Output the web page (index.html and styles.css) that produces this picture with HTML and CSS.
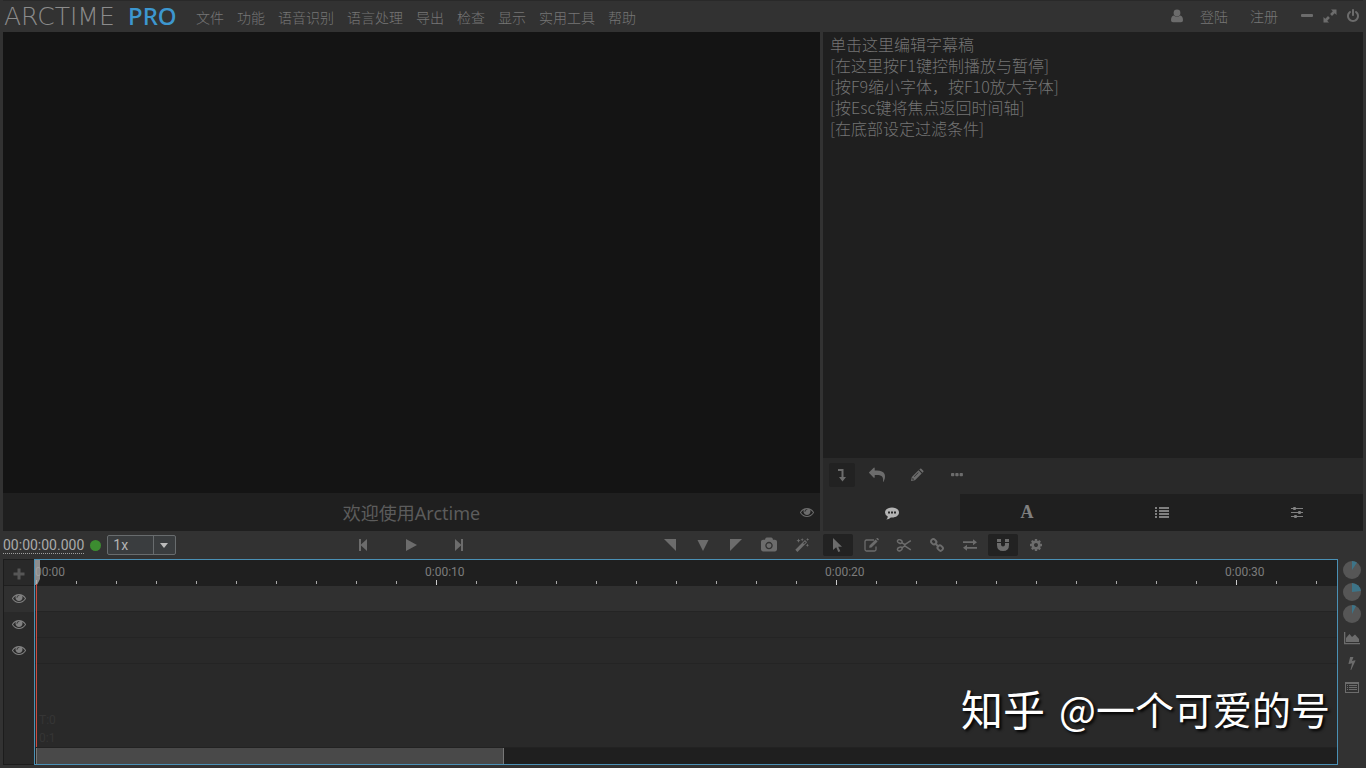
FILE: index.html
```html
<!DOCTYPE html>
<html lang="zh-CN">
<head>
<meta charset="utf-8">
<title>Arctime Pro</title>
<link rel="stylesheet" href="styles.css">
</head>
<body>
<svg class="sprite" aria-hidden="true">
  <symbol id="eye" viewBox="0 0 1792 1792"><path d="M1664 960q-152-236-381-353 61 104 61 225 0 185-131.5 316.5t-316.5 131.5-316.5-131.5-131.5-316.5q0-121 61-225-229 117-381 353 133 205 333.5 326.5t434.5 121.5 434.5-121.5 333.5-326.5zm-720-384q0-20-14-34t-34-14q-125 0-214.5 89.5t-89.5 214.5q0 20 14 34t34 14 34-14 14-34q0-86 61-147t147-61q20 0 34-14t14-34zm848 384q0 34-20 69-140 230-376.5 368.5t-499.5 138.5-499.5-139-376.5-368q-20-35-20-69t20-69q140-229 376.5-368t499.5-139 499.5 139 376.5 368q20 35 20 69z"/></symbol>
</svg>

<header class="topbar">
  <h1 class="brand"><span class="brand-name">ARCTIME</span><span class="brand-pro">PRO</span></h1>
  <nav class="menu">
    <button>文件</button><button>功能</button><button>语音识别</button><button>语言处理</button><button>导出</button><button>检查</button><button>显示</button><button>实用工具</button><button>帮助</button>
  </nav>
  <div class="account">
    <svg class="icon person" viewBox="0 0 14 14"><circle cx="7" cy="4" r="3.4"/><path d="M3.8 6.4Q1 7 1 11.2 1 13.2 3 13.2h8q2 0 2-2Q13 7 10.2 6.4 7 9.200 3.800 6.400z"/></svg>
    <a href="#login">登陆</a>
    <a href="#register">注册</a>
  </div>
  <div class="window-controls">
    <button aria-label="最小化"><svg class="icon" viewBox="0 0 14 14"><rect x="1" y="5" width="12" height="3" rx="1"/></svg></button>
    <button aria-label="缩放"><svg class="icon" viewBox="0 0 14 14"><path d="M8 .5h5.500V6l-1.800-1.800L9 6.900 7.100 5l2.700-2.700zM6 13.500H.5V8l1.800 1.800L5 7.100 6.900 9l-2.700 2.700z"/></svg></button>
    <button aria-label="退出"><svg class="icon" viewBox="0 0 1792 1792"><path d="M1664 896q0 156-61 298t-164 245-245 164-298 61-298-61-245-164-164-245-61-298q0-182 80.500-343t226.500-270q43-32 95.500-25t83.500 50q32 42 24.500 94.500t-49.500 84.500q-98 74-151.500 181t-53.500 228q0 104 40.500 198.500t109.500 163.500 163.500 109.500 198.500 40.500 198.500-40.500 163.500-109.500 109.500-163.500 40.500-198.500q0-121-53.500-228t-151.500-181q-42-32-49.500-84.500t24.500-94.500q31-43 84-50t95 25q146 109 226.500 270t80.500 343zm-640-768v640q0 52-38 90t-90 38-90-38-38-90v-640q0-52 38-90t90-38 90 38 38 90z"/></svg></button>
  </div>
</header>

<main class="workspace columns">
  <section class="player">
    <div class="screen"></div>
    <div class="caption">
      <p>欢迎使用Arctime</p>
      <button aria-label="显示字幕"><svg class="icon"><use href="#eye"/></svg></button>
    </div>
  </section>
  <section class="script">
    <textarea class="editor" aria-label="字幕稿" spellcheck="false">单击这里编辑字幕稿
[在这里按F1键控制播放与暂停]
[按F9缩小字体，按F10放大字体]
[按Esc键将焦点返回时间轴]
[在底部设定过滤条件]</textarea>
    <div class="script-tools">
      <button class="pressed" aria-label="逐行"><svg class="icon" viewBox="0 0 14 14"><path d="M3 1h5.500v8H11l-3.500 4.500L4 9h2.500V3H3z"/></svg></button>
      <div class="script-extra">
        <button aria-label="撤销"><svg class="icon large" viewBox="0 0 1792 1792"><path d="M1792 1120q0 166-127 451-3 7-10.500 24t-13.500 30-13 22q-12 17-28 17-15 0-23.500-10t-8.500-25q0-9 2.500-26.500t2.500-23.500q5-68 5-123 0-101-17.500-181t-48.500-138.500-80-101-105.500-69.500-133-42.500-154-21.500-175.500-6h-224v256q0 26-19 45t-45 19-45-19l-512-512q-19-19-19-45t19-45l512-512q19-19 45-19t45 19 19 45v256h224q713 0 875 403 53 134 53 333z"/></svg></button>
        <button aria-label="编辑"><svg class="icon" viewBox="0 0 14 14"><path fill-rule="evenodd" d="M1 13l.8-4L8.500 2.300l3.200 3.200L5 12.200zM2.600 9.800l-.3 1.900 1.900-.3zM9.300 1.500l.8-.8q.6-.5 1.200 0l2 2q.5.6 0 1.200l-.8.8zM8.200 4.300L4 8.500l.4.400 4.200-4.200z"/></svg></button>
        <button aria-label="更多"><svg class="icon" viewBox="0 0 14 14"><rect x="1" y="5" width="3.300" height="3.300" rx=".8"/><rect x="5.300" y="5" width="3.300" height="3.300" rx=".8"/><rect x="9.600" y="5" width="3.300" height="3.300" rx=".8"/></svg></button>
      </div>
    </div>
    <div class="tabs" role="tablist">
      <button role="tab" aria-selected="true" aria-label="字幕稿"><svg class="icon large" viewBox="0 0 16 16"><path fill-rule="evenodd" d="M8 2.500c4.200 0 7 2.200 7 5s-2.800 5-7 5l-1.200-.1Q5 14.300 2.300 14.500q1.400-1.200 1.500-3Q1 10 1 7.500c0-2.800 2.800-5 7-5zM4 6.500v2h2v-2zm3 0v2h2v-2zm3 0v2h2v-2z"/></svg></button>
      <button role="tab" aria-selected="false" class="letter">A</button>
      <button role="tab" aria-selected="false" aria-label="列表"><svg class="icon" viewBox="0 0 14 14"><path d="M0 1h2v2H0zM4 1h10v2H4zM0 4h2v2H0zM4 4h10v2H4zM0 7h2v2H0zM4 7h10v2H4zM0 10h2v2H0zM4 10h10v2H4z"/></svg></button>
      <button role="tab" aria-selected="false" aria-label="设置"><svg class="icon" viewBox="0 0 14 14"><path d="M1 2h12v1H1zM1 6h12v1H1zM1 10h12v1H1z"/><rect x="3" y="1" width="3" height="3" rx="1"/><rect x="8" y="5" width="3" height="3" rx="1"/><rect x="4" y="9" width="3" height="3" rx="1"/></svg></button>
    </div>
  </section>
</main>

<div class="toolbar columns">
  <div class="playback">
    <div class="clock">
      <output class="timecode">00:00:00.000</output>
      <span class="status-dot"></span>
      <label class="speed"><select aria-label="播放速度"><option>1x</option><option>2x</option></select><svg class="speed-arrow" viewBox="0 0 8 5"><path d="M0 0h8L4 5z"/></svg></label>
    </div>
    <div class="transport">
      <button aria-label="上一条"><svg class="icon" viewBox="0 0 14 14"><path d="M3 1h2v5.500L11 1v12L5 7.500V13H3z"/></svg></button>
      <button aria-label="播放"><svg class="icon" viewBox="0 0 14 14"><path d="M2 1l11 6-11 6z"/></svg></button>
      <button aria-label="下一条"><svg class="icon" viewBox="0 0 14 14"><path d="M11 1H9v5.500L3 1v12l6-5.500V13h2z"/></svg></button>
    </div>
    <div class="tools marks">
      <button aria-label="设定起点"><svg class="icon" viewBox="0 0 14 14"><path d="M1 1h12v12z"/></svg></button>
      <button aria-label="标记"><svg class="icon" viewBox="0 0 14 14"><path d="M1.500 2h11L7 13z"/></svg></button>
      <button aria-label="设定终点"><svg class="icon" viewBox="0 0 14 14"><path d="M1 1h12L1 13z"/></svg></button>
      <button aria-label="截图"><svg class="icon large" viewBox="-64 0 1920 1792"><path d="M896 672q119 0 203.500 84.500t84.500 203.500-84.500 203.500-203.500 84.500-203.500-84.500-84.500-203.500 84.500-203.500 203.500-84.500zm704-416q106 0 181 75t75 181v896q0 106-75 181t-181 75h-1408q-106 0-181-75t-75-181v-896q0-106 75-181t181-75h224l51-136q19-49 69.500-84.500t103.500-35.500h512q53 0 103.500 35.500t69.500 84.500l51 136h224zm-704 1152q185 0 316.500-131.500t131.500-316.500-131.500-316.500-316.500-131.500-316.500 131.500-131.500 316.500 131.500 316.500 316.500 131.500z"/></svg></button>
      <button aria-label="魔棒"><svg class="icon" viewBox="0 0 14 14"><path fill-rule="evenodd" d="M.3 11.800L10 2.100l2.100 2.100-9.700 9.700zM8.200 5.300l.8.800 1.800-1.800-.8-.8z"/><path d="M3.500.6l.6 1.500 1.500.6-1.500.6-.6 1.500-.6-1.500-1.500-.6 1.500-.6zM7.200 0l.5 1.200 1.200.5-1.200.5-.5 1.200-.5-1.200-1.200-.5 1.200-.5zM12.600 0l.5 1 1 .4-1 .5-.5 1-.5-1-1-.5 1-.4zM12.400 5.600l.5 1.200 1.200.5-1.200.5-.5 1.200-.5-1.200-1.200-.5 1.200-.5z"/></svg></button>
    </div>
  </div>
  <div class="tools">
    <button class="pressed" aria-label="选择"><svg class="icon" viewBox="0 0 14 14"><path d="M2 0l9 8.700H7.200l2.100 4.500-2 .8-2.100-4.700L2 12z"/></svg></button>
    <button aria-label="新建字幕"><svg class="icon large" viewBox="0 0 16 16"><path d="M11 3H3.500Q2 3 2 4.500v8Q2 14 3.500 14h8q1.500 0 1.500-1.500V9.500" fill="none" stroke="currentColor" stroke-width="1.300"/><path d="M6.500 8.500L12.600 2.400l2 2L8.500 10.500l-2.300.3zM13.200 1.800l.7-.7q.4-.3.800 0l1 1q.3.400 0 .8l-.7.700z"/></svg></button>
    <button aria-label="剪切"><svg class="icon large stroked" viewBox="0 0 16 16"><ellipse cx="3.800" cy="4.500" rx="2.400" ry="1.700" transform="rotate(25 3.800 4.500)"/><ellipse cx="3.800" cy="12" rx="2.400" ry="1.700" transform="rotate(-25 3.800 12)"/><path d="M5.800 5.700l3 2 6-4M5.800 10.800l3-2 6 4M8.800 7.700v1.100"/></svg></button>
    <button aria-label="链接"><svg class="icon stroked heavy" viewBox="0 0 14 14"><rect x="1" y="1.500" width="5.500" height="4.500" rx="2" transform="rotate(45 3.700 3.700)"/><rect x="7.500" y="7.800" width="5.500" height="4.500" rx="2" transform="rotate(45 10.200 10)"/><path d="M4.800 5l4 4"/></svg></button>
    <button aria-label="交换"><svg class="icon large" viewBox="0 0 16 16"><path d="M1 4.300h10V2.200L15 5.200l-4 3V6.100H1zM15 9.900H5V7.800l-4 3 4 3v-2.100h10z"/></svg></button>
    <button class="pressed" aria-label="吸附"><svg class="icon" viewBox="0 0 14 14"><path d="M1 1h4v3H1zM9 1h4v3H9zM1 5h4v1.500q0 2 2 2t2-2V5h4v2q0 6-6 6T1 7z"/></svg></button>
    <button aria-label="设置"><svg class="icon" viewBox="0 0 1792 1792"><path d="M1152 896q0-106-75-181t-181-75-181 75-75 181 75 181 181 75 181-75 75-181zm512-109v222q0 12-8 23t-20 13l-185 28q-19 54-39 91 35 50 107 138 10 12 10 25t-9 23q-27 37-99 108t-94 71q-12 0-26-9l-138-108q-44 23-91 38-16 136-29 186-7 28-36 28h-222q-14 0-24.500-8.500t-11.500-21.500l-28-184q-49-16-90-37l-141 107q-10 9-25 9-14 0-25-11-126-114-165-168-7-10-7-23 0-12 8-23 15-21 51-66.500t54-70.500q-27-50-41-99l-183-27q-13-2-21-12.500t-8-23.500v-222q0-12 8-23t19-13l186-28q14-46 39-92-40-57-107-138-10-12-10-24 0-10 9-23 26-36 98.500-107.500t94.500-71.500q13 0 26 10l138 107q44-23 91-38 16-136 29-186 7-28 36-28h222q14 0 24.500 8.500t11.500 21.500l28 184q49 16 90 37l142-107q9-9 24-9 13 0 25 10 129 119 165 170 7 8 7 22 0 12-8 23-15 21-51 66.500t-54 70.500q26 50 41 98l183 28q13 2 21 12.500t8 23.500z"/></svg></button>
  </div>
</div>

<section class="timeline">
  <div class="track-heads">
    <button class="add" aria-label="添加轨道"><svg class="icon" viewBox="0 0 14 14"><path d="M5.500 1.500h3v4h4v3h-4v4h-3v-4h-4v-3h4z"/></svg></button>
    <button class="current" aria-label="轨道 1"><svg class="icon"><use href="#eye"/></svg></button>
    <button aria-label="轨道 2"><svg class="icon"><use href="#eye"/></svg></button>
    <button aria-label="轨道 3"><svg class="icon"><use href="#eye"/></svg></button>
  </div>
  <div class="canvas">
    <div class="ruler"><span class="origin">00:00</span><span>0:00:10</span><span>0:00:20</span><span class="last">0:00:30</span></div>
    <div class="track current"></div>
    <div class="track"></div>
    <div class="track"></div>
    <div class="info"><span>T:0</span><span>0:1</span></div>
    <div class="scrollbar"><div class="thumb"></div></div>
    <svg class="playhead-cap" viewBox="0 0 5 25"><path d="M0 0h5v19l-3 6H0z"/></svg>
    <div class="playhead"></div>
    <p class="watermark"><b>知乎</b><span>@一个可爱的号</span></p>
  </div>
  <aside class="side">
    <svg class="dial" viewBox="0 0 18 18"><circle cx="9" cy="9" r="9"/><path class="wedge" d="M9 9V0q3 0 5 1.500z"/></svg>
    <svg class="dial" viewBox="0 0 18 18"><circle cx="9" cy="9" r="9"/><path class="wedge" d="M9 9V0q8 1 9 8z"/></svg>
    <svg class="dial" viewBox="0 0 18 18"><circle cx="9" cy="9" r="9"/><path class="wedge" d="M9 9V0q2 0 4 1z"/></svg>
    <button aria-label="波形"><svg class="icon large" viewBox="0 0 16 16"><path d="M0 2h1.300v11H16v1.300H0zM2 12V8l3.500-4L8 7l3-2.500L15 9v3z"/></svg></button>
    <button aria-label="快速"><svg class="icon" viewBox="0 0 1792 1792"><path d="M1333 566q18 20 7 44l-540 1157q-13 25-42 25-4 0-14-2-17-5-25.500-19t-4.500-30l197-808-406 101q-4 1-12 1-18 0-31-11-18-15-13-39l201-825q4-14 16-23t28-9h328q19 0 32 12.500t13 29.500q0 8-5 18l-171 463 396-98q8-2 12-2 19 0 34 15z"/></svg></button>
    <button aria-label="列表"><svg class="icon" viewBox="0 0 14 14"><path fill-rule="evenodd" d="M0 1h14v11H0zM1 3v8h12V3z"/><path d="M2 4h1v1H2zM4 4h8v1H4zM2 6h1v1H2zM4 6h8v1H4zM2 8h1v1H2zM4 8h8v1H4z"/></svg></button>
  </aside>
</section>
</body>
</html>
```
FILE: styles.css
```css
* { box-sizing: border-box; }

body {
  margin: 0;
  height: 100vh;
  display: flex;
  flex-direction: column;
  padding: 0 3px 3px;
  overflow: hidden;
  background: #323232;
  color: #6c6c6c;
  font: 14px "Noto Sans CJK SC", sans-serif;
}

button {
  display: flex;
  align-items: center;
  justify-content: center;
  margin: 0;
  padding: 0;
  border: 0;
  background: none;
  color: inherit;
  font: inherit;
}

h1, p { margin: 0; }
a { color: inherit; text-decoration: none; }
.sprite { position: absolute; width: 0; height: 0; }
.icon { display: block; width: 14px; height: 14px; fill: currentColor; }
.icon.large { width: 16px; height: 16px; }
.icon.stroked { fill: none; stroke: currentColor; stroke-width: 1.5; }
.icon.heavy { stroke-width: 1.9; }

.columns {
  display: grid;
  grid-template-columns: 817fr 540fr;
  column-gap: 3px;
}

/* Top bar */
.topbar {
  display: flex;
  align-items: center;
  height: 32px;
  padding-bottom: 1px;
  border-top: 1px solid #292929;
}
.brand {
  display: flex;
  align-items: center;
  width: 193px;
  padding-left: 1px;
  line-height: 30px;
  font-weight: 400;
}
.brand-name {
  width: 124px;
  padding-top: 1px;
  color: #8c8c8c;
  font-family: "DejaVu Sans", sans-serif;
  font-size: 25px;
  font-weight: 200;
}
.brand-pro {
  color: #3d97cf;
  font-family: "Noto Sans", sans-serif;
  font-size: 24px;
  font-weight: 500;
}
.menu { display: flex; gap: 13px; color: #767676; font-weight: 300; }
.menu button { line-height: 28px; padding-top: 2px; }
.account {
  display: flex;
  align-items: center;
  gap: 22px;
  margin-left: auto;
  color: #767676;
  font-weight: 300;
}
.person { margin-right: -6px; color: #6c6c6c; }
.window-controls { display: flex; gap: 9px; margin: 0 3px 0 22px; }

/* Player */
.workspace { flex: 1; min-height: 0; }
.player, .script { display: flex; flex-direction: column; min-height: 0; }
.screen { flex: 1; background: #141414; }
.caption {
  display: grid;
  grid-template-columns: 26px 1fr 26px;
  align-items: center;
  height: 38px;
  background: #1f1f1f;
}
.caption p {
  grid-column: 2;
  padding-top: 2px;
  text-align: center;
  color: #5c5c5c;
  font: 18px/36px "Noto Sans", "Noto Sans CJK SC", sans-serif;
}

/* Script editor */
.editor {
  flex: 1;
  width: 100%;
  padding: 2px 7px;
  border: 0;
  outline: 0;
  resize: none;
  background: #1f1f1f;
  color: #747474;
  font: 300 16px/21px "Noto Sans CJK SC", sans-serif;
}
.script-tools {
  display: flex;
  align-items: center;
  gap: 9px;
  height: 36px;
  padding: 0 6px 2px;
  background: #292929;
}
.script-tools button { width: 26px; height: 24px; }
.script-extra { display: flex; gap: 14px; }
.pressed { background: #222; border-radius: 2px; }
.tabs {
  display: grid;
  grid-template-columns: 137fr 134fr 136fr 133fr;
  height: 37px;
  background: #1f1f1f;
}
.tabs button { color: #808080; }
.tabs [aria-selected="true"] { background: #292929; color: #b4b4b4; }
.tabs .letter { font: bold 18px "Liberation Serif", serif; }

/* Toolbar */
.toolbar { height: 28px; }
.playback {
  display: grid;
  grid-template-columns: 1fr auto 1fr;
  align-items: center;
}
.clock { display: flex; align-items: center; gap: 6px; }
.timecode {
  padding-top: 1px;
  border-bottom: 1px dotted #a0a0a0;
  color: #aaa;
  font: 14px/15px Roboto, sans-serif;
}
.status-dot { width: 11px; height: 11px; border-radius: 50%; background: #3c8c30; }
.speed { position: relative; display: flex; }
.speed select {
  width: 69px;
  height: 20px;
  padding: 0 5px;
  border: 1px solid #686c6e;
  border-radius: 2px;
  appearance: none;
  background: linear-gradient(#686c6e, #686c6e) 45px 0 / 1px 100% no-repeat #3a3d3f;
  color: #b4b4b4;
  font: 14px Roboto, sans-serif;
}
.speed-arrow {
  position: absolute;
  right: 8px;
  top: 8px;
  width: 8px;
  height: 5px;
  fill: #bbb;
  pointer-events: none;
}
.transport { display: flex; gap: 18px; padding-right: 2px; }
.transport button { width: 30px; }
.tools { display: flex; align-items: center; gap: 3px; }
.tools button { width: 30px; height: 22px; }
.marks { justify-self: end; padding-right: 3px; }

/* Timeline */
.timeline {
  display: grid;
  grid-template-columns: 31px 1fr 25px;
  height: 206px;
}
.track-heads {
  border: 1px solid #1c1c1c;
  border-right: 0;
  background: #292929;
  color: #808080;
}
.track-heads button { width: 100%; height: 26px; padding-bottom: 2px; }
.track-heads .add { padding: 2px 0 0; color: #565656; border-bottom: 1px solid #1f1f1f; }
.track-heads .current, .track.current { background: #303030; }
.canvas {
  position: relative;
  display: flex;
  flex-direction: column;
  min-width: 0;
  border: 1px solid #4a90b5;
  background: #292929;
}
.ruler {
  display: flex;
  height: 26px;
  background:
    repeating-linear-gradient(90deg, #ccc 0 1px, transparent 1px 400px) 1px 20px / 100% 5px no-repeat,
    repeating-linear-gradient(90deg, #aaa 0 1px, transparent 1px 40px) 1px 21px / 100% 3px no-repeat,
    #1f1f1f;
  color: #7c7c7c;
  font: 12px/24px Roboto, sans-serif;
}
.ruler span { flex: 0 0 400px; }
.ruler .origin { flex-basis: 390px; }
.ruler .last { flex: 1; }
.track { height: 26px; border-bottom: 1px solid #242424; }
.info {
  flex: 1;
  display: flex;
  flex-direction: column;
  justify-content: flex-end;
  padding: 0 4px;
  color: #353535;
  font: 12px/18px Roboto, sans-serif;
}
.scrollbar {
  height: 17px;
  padding-left: 1px;
  border-top: 1px solid #222;
  background: #1f1f1f;
}
.thumb {
  width: 36%;
  height: 100%;
  border: solid #777;
  border-width: 0 1px;
  background: #494949;
}
.playhead {
  position: absolute;
  left: 1px;
  top: 24px;
  bottom: 17px;
  width: 1px;
  background: #cc4a40;
}
.playhead-cap {
  position: absolute;
  left: 0;
  top: 0;
  width: 5px;
  height: 25px;
  fill: #aaa;
  opacity: .8;
}
.watermark {
  position: absolute;
  right: 7px;
  bottom: 26px;
  display: flex;
  align-items: center;
  gap: 14px;
  color: #fff;
  font-size: 39px;
  line-height: 60px;
  white-space: nowrap;
  text-shadow: 2px 2px 3px #000;
}
.watermark b { font-size: 42px; font-weight: 400; }

.side {
  display: flex;
  flex-direction: column;
  align-items: center;
  gap: 4px;
  padding: 2px 0 0 3px;
}
.side button { height: 21px; }
.dial { width: 18px; height: 18px; fill: #565656; }
.dial .wedge { fill: #3d7488; }
```
